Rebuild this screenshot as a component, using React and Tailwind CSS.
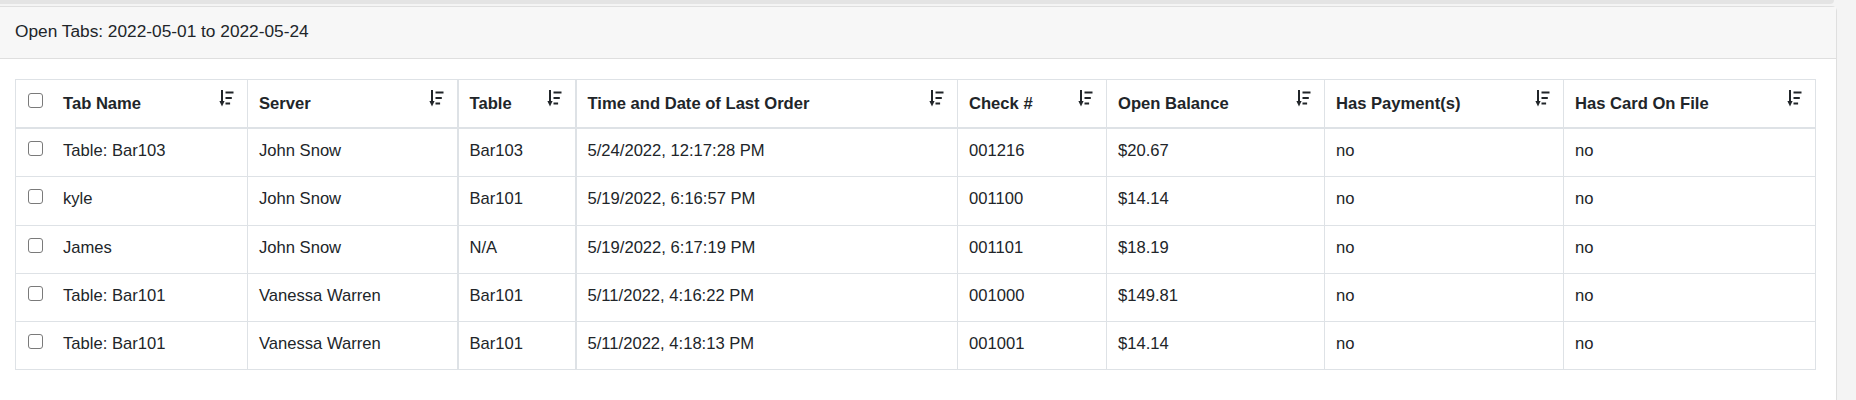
import React from "react";

const columns = [
  { label: "Tab Name", width: "w-[232px]", check: true },
  { label: "Server", width: "w-[210px]", thick: true },
  { label: "Table", width: "w-[118px]", thick: true },
  { label: "Time and Date of Last Order", width: "w-[382px]" },
  { label: "Check #", width: "w-[149px]" },
  { label: "Open Balance", width: "w-[218px]" },
  { label: "Has Payment(s)", width: "w-[239px]" },
  { label: "Has Card On File", width: "w-[252px]" },
];

const rows = [
  ["Table: Bar103", "John Snow", "Bar103", "5/24/2022, 12:17:28 PM", "001216", "$20.67", "no", "no"],
  ["kyle", "John Snow", "Bar101", "5/19/2022, 6:16:57 PM", "001100", "$14.14", "no", "no"],
  ["James", "John Snow", "N/A", "5/19/2022, 6:17:19 PM", "001101", "$18.19", "no", "no"],
  ["Table: Bar101", "Vanessa Warren", "Bar101", "5/11/2022, 4:16:22 PM", "001000", "$149.81", "no", "no"],
  ["Table: Bar101", "Vanessa Warren", "Bar101", "5/11/2022, 4:18:13 PM", "001001", "$14.14", "no", "no"],
];

// sort-amount-down: arrow on the left, three bars getting shorter
function SortIcon() {
  return (
    <svg
      width="15"
      height="17"
      viewBox="0 0 15 17"
      className="mr-[2px] -mt-[1px] shrink-0 text-[#212529]"
      fill="currentColor"
    >
      <rect x="2" y="0" width="2" height="12" />
      <polygon points="0.4,11 5.6,11 3,16.6" />
      <rect x="6.5" y="1.5" width="8" height="2" />
      <rect x="6.5" y="7" width="6.3" height="2" />
      <rect x="6.5" y="12.5" width="4.6" height="2" />
    </svg>
  );
}

function Checkbox({ className = "" }) {
  return (
    <span
      className={`block h-[15px] w-[15px] shrink-0 rounded-[3px] border border-[#7a7a7a] bg-white ${className}`}
    />
  );
}

export default function App() {
  return (
    <div className="h-[400px] overflow-hidden bg-[#f4f4f4] font-['Liberation_Sans',Arial,sans-serif] text-[16.6px] text-[#212529]">
      <div className="h-[4px] w-[1834px] rounded-br-[4px] bg-[#e4e4e4]" />
      <div className="mt-[2px] h-[420px] w-[1837px] rounded-tr-[5px] border border-l-0 border-[#dfdfdf] bg-white">
        <div className="border-b border-[#dfdfdf] bg-[#f7f7f7] pl-[15px] pt-[12px] pb-[14px] text-[17.3px] leading-[25px]">
          Open Tabs: 2022-05-01 to 2022-05-24
        </div>
        <div className="pl-[15px] pt-[20px]">
          <table className="w-[1800px] table-fixed border-collapse border border-[#dee2e6]">
            <colgroup>
              {columns.map((c) => (
                <col key={c.label} className={c.width} />
              ))}
            </colgroup>
            <thead>
              <tr>
                {columns.map((c) => (
                  <th
                    key={c.label}
                    className={`border-b-2 border-[#dee2e6] px-[11px] py-[11px] text-left font-bold leading-[25px] ${
                      c.thick ? "border-r-2" : "border-r"
                    }`}
                  >
                    <div className="flex items-start justify-between">
                      <div className="flex items-start">
                        {c.check && <Checkbox className="ml-[1px] mr-[20px] mt-[1.5px]" />}
                        <span>{c.label}</span>
                      </div>
                      <SortIcon />
                    </div>
                  </th>
                ))}
              </tr>
            </thead>
            <tbody>
              {rows.map((r, i) => (
                <tr key={i}>
                  {r.map((cell, j) => (
                    <td
                      key={j}
                      className={`border-b border-[#dee2e6] px-[11px] pt-[9px] pb-[13.25px] leading-[25px] whitespace-nowrap ${
                        columns[j].thick ? "border-r-2" : "border-r"
                      }`}
                    >
                      {j === 0 ? (
                        <div className="flex items-start">
                          <Checkbox className="ml-[1px] mr-[20px] mt-[3px]" />
                          <span>{cell}</span>
                        </div>
                      ) : (
                        cell
                      )}
                    </td>
                  ))}
                </tr>
              ))}
            </tbody>
          </table>
        </div>
      </div>
    </div>
  );
}
